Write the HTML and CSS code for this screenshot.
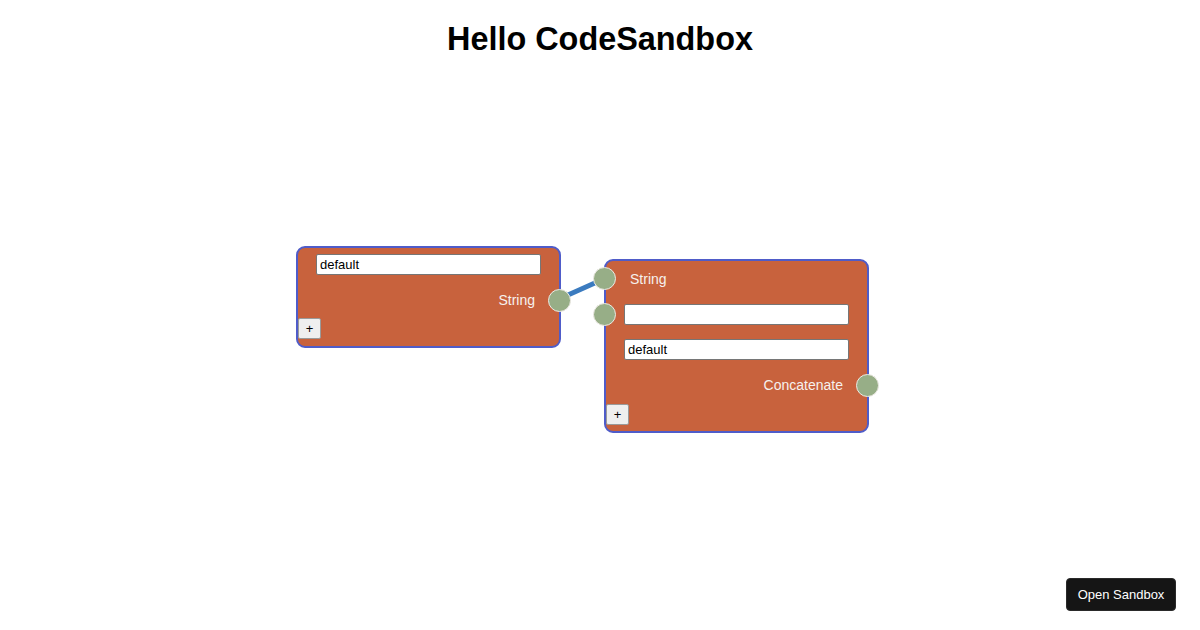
FILE: index.html
```html
<!DOCTYPE html>
<html>
<head>
<meta charset="utf-8">
<title>Hello CodeSandbox</title>
<link rel="stylesheet" href="styles.css">
</head>
<body>
<h1 class="title">Hello CodeSandbox</h1>

<div class="canvas">
  <svg class="edges" width="1200" height="630" viewBox="0 0 1200 630">
    <line x1="559" y1="299" x2="606" y2="278" stroke="#3b7bbf" stroke-width="5" stroke-linecap="round"/>
  </svg>

  <div class="node node-string">
    <input class="field first" type="text" value="default">
    <div class="out-row">
      <span class="label">String</span>
      <span class="port port-out"></span>
    </div>
    <button class="add">+</button>
  </div>

  <div class="node node-concat">
    <div class="in-row label-row">
      <span class="port port-in"></span>
      <span class="label">String</span>
    </div>
    <div class="in-row">
      <span class="port port-in"></span>
      <input class="field" type="text" value="">
    </div>
    <input class="field second" type="text" value="default">
    <div class="out-row concat-out">
      <span class="label">Concatenate</span>
      <span class="port port-out"></span>
    </div>
    <button class="add">+</button>
  </div>
</div>

<button class="open-sandbox">Open Sandbox</button>
</body>
</html>
```

FILE: styles.css
```css
html, body {
  margin: 0;
  padding: 0;
  background: #ffffff;
}

body {
  font-family: "Liberation Sans", Arial, sans-serif;
  width: 1200px;
  height: 630px;
  overflow: hidden;
  position: relative;
}

.title {
  margin: 21px 0 0;
  font-size: 32.4px;
  font-weight: bold;
  text-align: center;
  color: #000;
  line-height: 37px;
}

.canvas {
  position: absolute;
  inset: 0;
}

.edges {
  position: absolute;
  left: 0;
  top: 0;
}

.node {
  position: absolute;
  box-sizing: border-box;
  width: 265px;
  background: #c8623d;
  border: 2px solid #4f5cc9;
  border-radius: 9px;
  display: flex;
  flex-direction: column;
  align-items: stretch;
}

.node-string {
  left: 296px;
  top: 246px;
  height: 102px;
}

.node-concat {
  left: 604px;
  top: 259px;
  height: 174px;
}

.field {
  box-sizing: border-box;
  height: 21px;
  width: 225px;
  margin: 0 0 0 18px;
  padding: 1px 3px;
  border: 1px solid #767676;
  border-radius: 2px;
  background: #fff;
  font-family: "Liberation Sans", Arial, sans-serif;
  font-size: 13px;
  color: #000;
  outline: none;
}

.field.first {
  margin-top: 6px;
}

.field.second {
  margin-top: 14px;
}

.label {
  font-size: 14px;
  color: #f6f1ee;
  line-height: 22px;
}

.out-row {
  position: relative;
  height: 22px;
  display: flex;
  justify-content: flex-end;
  align-items: center;
  padding-right: 24px;
}

.node-string .out-row {
  margin-top: 14px;
}

.concat-out {
  margin-top: 14px;
}

.in-row {
  position: relative;
  height: 22px;
  display: flex;
  align-items: center;
}

.in-row .field {
  margin-left: 18px;
}

.label-row {
  margin-top: 6px;
  padding-left: 24px;
}

.label-row .label {
  position: relative;
  top: 1px;
}

.in-row + .in-row {
  margin-top: 14px;
}

.port {
  position: absolute;
  top: 0;
  box-sizing: border-box;
  width: 23px;
  height: 23px;
  border-radius: 50%;
  background: #97ae87;
  border: 1px solid #ece9e4;
}

.port-in {
  left: -13px;
}

.port-out {
  right: -12px;
}

.add {
  box-sizing: border-box;
  width: 23px;
  height: 21px;
  margin-top: 7px;
  padding: 0;
  align-self: flex-start;
  background: #efefef;
  border: 1px solid #9a9a9a;
  border-radius: 2px;
  font-family: "Liberation Sans", Arial, sans-serif;
  font-size: 13px;
  color: #000;
  line-height: 19px;
}

.node-concat .add {
  margin-top: 8px;
}

.open-sandbox {
  position: fixed;
  right: 24px;
  bottom: 19px;
  box-sizing: border-box;
  width: 110px;
  height: 33px;
  padding: 0;
  background: #151515;
  color: #ffffff;
  border: 1px solid #2a2a2a;
  border-radius: 4px;
  font-family: "Liberation Sans", Arial, sans-serif;
  font-size: 13px;
}
```
